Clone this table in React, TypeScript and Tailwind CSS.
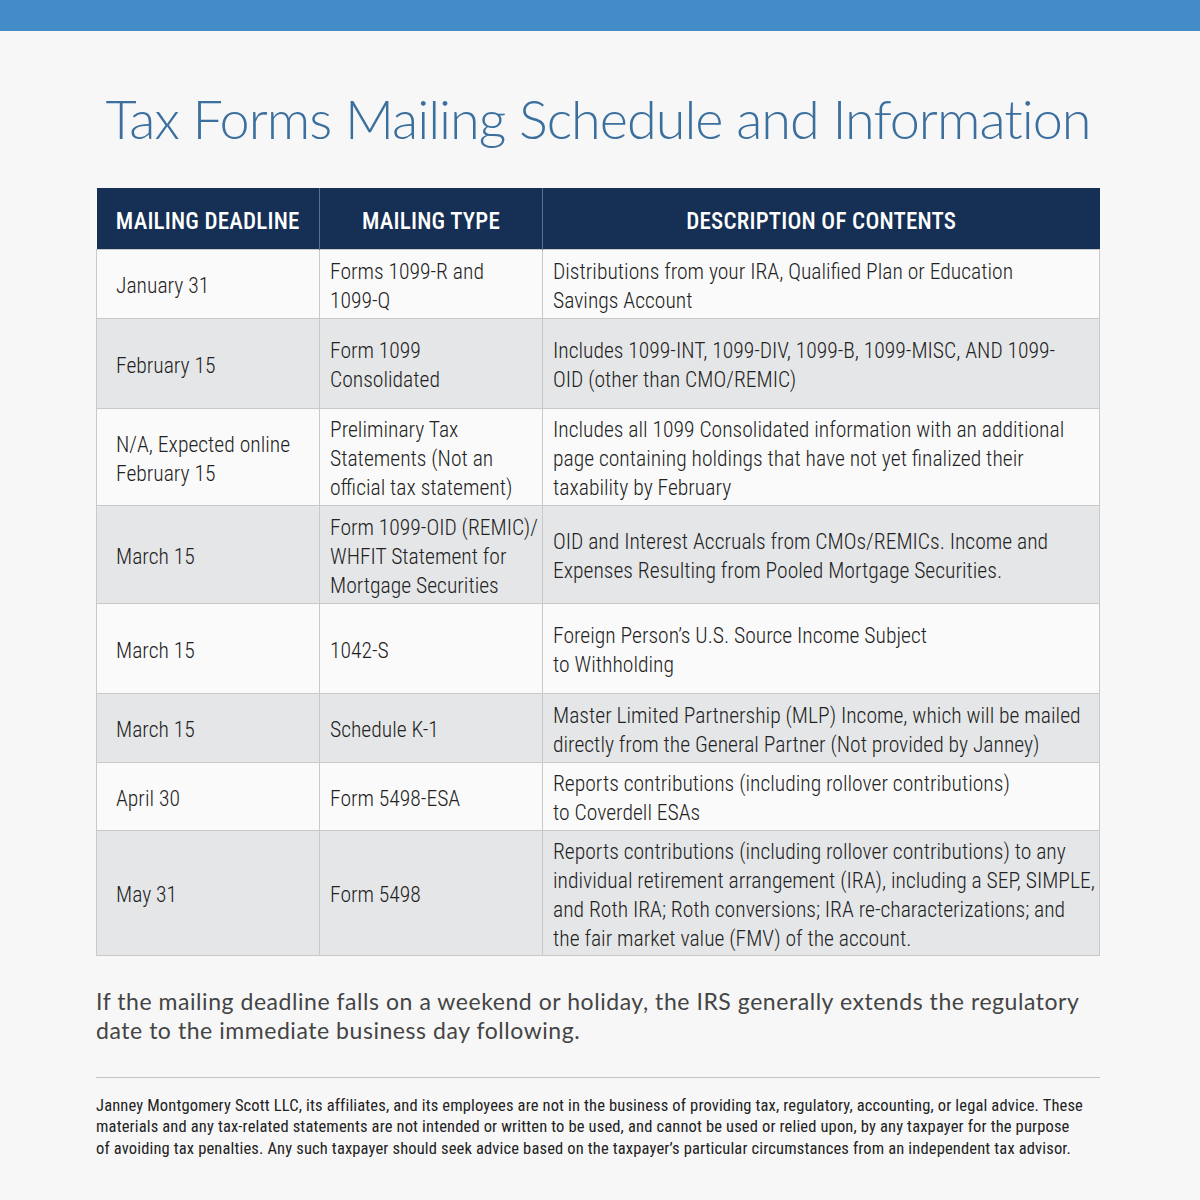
const rows: { deadline: string[]; type: string[]; desc: string[]; h: number; shade: boolean }[] = [
  {
    deadline: ["January 31"],
    type: ["Forms 1099-R and", "1099-Q"],
    desc: ["Distributions from your IRA, Qualified Plan or Education", "Savings Account"],
    h: 69,
    shade: false,
  },
  {
    deadline: ["February 15"],
    type: ["Form 1099", "Consolidated"],
    desc: ["Includes 1099-INT, 1099-DIV, 1099-B, 1099-MISC, AND 1099-", "OID (other than CMO/REMIC)"],
    h: 90,
    shade: true,
  },
  {
    deadline: ["N/A, Expected online", "February 15"],
    type: ["Preliminary Tax", "Statements (Not an", "official tax statement)"],
    desc: [
      "Includes all 1099 Consolidated information with an additional",
      "page containing holdings that have not yet finalized their",
      "taxability by February",
    ],
    h: 97,
    shade: false,
  },
  {
    deadline: ["March 15"],
    type: ["Form 1099-OID (REMIC)/", "WHFIT Statement for", "Mortgage Securities"],
    desc: ["OID and Interest Accruals from CMOs/REMICs. Income and", "Expenses Resulting from Pooled Mortgage Securities."],
    h: 98,
    shade: true,
  },
  {
    deadline: ["March 15"],
    type: ["1042-S"],
    desc: ["Foreign Person\u2019s U.S. Source Income Subject", "to Withholding"],
    h: 90,
    shade: false,
  },
  {
    deadline: ["March 15"],
    type: ["Schedule K-1"],
    desc: [
      "Master Limited Partnership (MLP) Income, which will be mailed",
      "directly from the General Partner (Not provided by Janney)",
    ],
    h: 69,
    shade: true,
  },
  {
    deadline: ["April 30"],
    type: ["Form 5498-ESA"],
    desc: ["Reports contributions (including rollover contributions)", "to Coverdell ESAs"],
    h: 68,
    shade: false,
  },
  {
    deadline: ["May 31"],
    type: ["Form 5498"],
    desc: [
      "Reports contributions (including rollover contributions) to any",
      "individual retirement arrangement (IRA), including a SEP, SIMPLE,",
      "and Roth IRA; Roth conversions; IRA re-characterizations; and",
      "the fair market value (FMV) of the account.",
    ],
    h: 125,
    shade: true,
  },
];

const cond = "font-['Roboto_Condensed','Liberation_Sans_Narrow','DejaVu_Sans_Condensed',sans-serif]";

function Lines({ lines }: { lines: string[] }) {
  return (
    <>
      {lines.map((l, i) => (
        <span key={i} className="block whitespace-nowrap">
          {l}
        </span>
      ))}
    </>
  );
}

export default function App() {
  return (
    <div className="min-h-[1200px] w-[1200px] bg-[#f7f7f7] text-[#222]">
      <div className="h-[31px] bg-[#438cc8]" />

      <div className="ml-[96px] w-[1004px] pb-10">
        <h1 className="pt-[53px] text-center font-['Lato',sans-serif] text-[54px] font-light leading-[70px] tracking-[-1px] whitespace-nowrap text-[#3b6f9e]">
          Tax Forms Mailing Schedule and Information
        </h1>

        <table className={`mt-[34px] w-[1004px] table-fixed border-collapse ${cond}`}>
          <colgroup>
            <col className="w-[223px]" />
            <col className="w-[223px]" />
            <col />
          </colgroup>
          <thead>
            <tr className="h-[61px] bg-[#152f55] text-[23px] tracking-[0.2px] text-white">
              <th className="border-r border-[#5a6f8f] pt-[7px] text-center font-medium">MAILING DEADLINE</th>
              <th className="border-r border-[#5a6f8f] pt-[7px] text-center font-medium">MAILING TYPE</th>
              <th className="pt-[7px] text-center font-medium">DESCRIPTION OF CONTENTS</th>
            </tr>
          </thead>
          <tbody className="text-[21.6px] font-light leading-[29px] text-[#222]">
            {rows.map((r, i) => (
              <tr
                key={i}
                style={{ height: r.h }}
                className={r.shade ? "bg-[#e5e6e8]" : "bg-[#fafafa]"}
              >
                <td className="border border-[#c9c9c9] pt-[4px] pl-[19px] pr-2 align-middle">
                  <Lines lines={r.deadline} />
                </td>
                <td className="border border-[#c9c9c9] pt-[4px] pl-[10px] pr-2 align-middle">
                  <Lines lines={r.type} />
                </td>
                <td className="border border-[#c9c9c9] pt-[4px] pl-[10px] pr-2 align-middle">
                  <Lines lines={r.desc} />
                </td>
              </tr>
            ))}
          </tbody>
        </table>

        <p className="mt-[31px] font-['Lato',sans-serif] text-[23px] leading-[29px] tracking-[0.55px] text-[#444]">
          <span className="block whitespace-nowrap">
            If the mailing deadline falls on a weekend or holiday, the IRS generally extends the regulatory
          </span>
          <span className="block whitespace-nowrap">date to the immediate business day following.</span>
        </p>

        <div className="mt-[32px] h-px bg-[#c4c4c4]" />

        <p className={`mt-[17px] text-[16.5px] leading-[21.5px] tracking-[0.15px] text-[#222] ${cond}`}>
          <span className="block whitespace-nowrap">
            Janney Montgomery Scott LLC, its affiliates, and its employees are not in the business of providing tax, regulatory, accounting, or legal advice. These
          </span>
          <span className="block whitespace-nowrap">
            materials and any tax-related statements are not intended or written to be used, and cannot be used or relied upon, by any taxpayer for the purpose
          </span>
          <span className="block whitespace-nowrap">
            of avoiding tax penalties. Any such taxpayer should seek advice based on the taxpayer&rsquo;s particular circumstances from an independent tax advisor.
          </span>
        </p>
      </div>
    </div>
  );
}
